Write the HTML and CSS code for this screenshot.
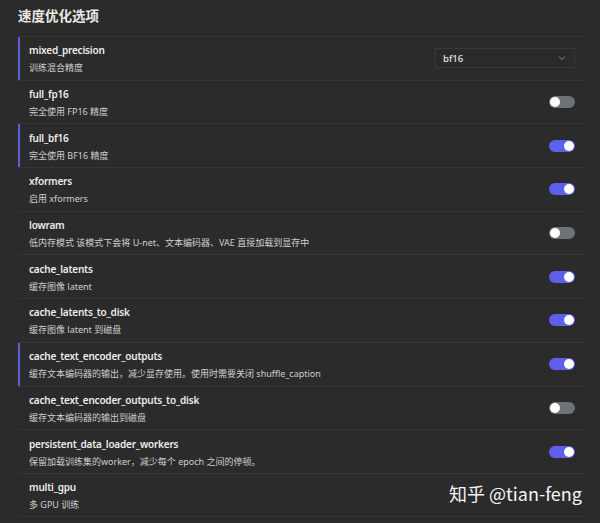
FILE: index.html
```html
<!DOCTYPE html>
<html lang="zh">
<head>
<meta charset="utf-8">
<link rel="stylesheet" href="styles.css">
</head>
<body>
<div class="page">
  <h2 class="heading">速度优化选项</h2>
  <div class="list">
    <div class="row modified">
      <div class="text"><div class="title">mixed_precision</div><div class="desc">训练混合精度</div></div>
      <div class="select"><span>bf16</span><svg class="chev" width="8" height="6" viewBox="0 0 8 6"><path d="M1 1.5 L4 4.5 L7 1.5" fill="none" stroke="#8a8a8a" stroke-width="1"/></svg></div>
    </div>
    <div class="row">
      <div class="text"><div class="title">full_fp16</div><div class="desc">完全使用 FP16 精度</div></div>
      <div class="toggle"></div>
    </div>
    <div class="row modified">
      <div class="text"><div class="title">full_bf16</div><div class="desc">完全使用 BF16 精度</div></div>
      <div class="toggle on"></div>
    </div>
    <div class="row">
      <div class="text"><div class="title">xformers</div><div class="desc">启用 xformers</div></div>
      <div class="toggle on"></div>
    </div>
    <div class="row">
      <div class="text"><div class="title">lowram</div><div class="desc">低内存模式 该模式下会将 U-net、文本编码器、VAE 直接加载到显存中</div></div>
      <div class="toggle"></div>
    </div>
    <div class="row">
      <div class="text"><div class="title">cache_latents</div><div class="desc">缓存图像 latent</div></div>
      <div class="toggle on"></div>
    </div>
    <div class="row">
      <div class="text"><div class="title">cache_latents_to_disk</div><div class="desc">缓存图像 latent 到磁盘</div></div>
      <div class="toggle on"></div>
    </div>
    <div class="row modified">
      <div class="text"><div class="title">cache_text_encoder_outputs</div><div class="desc">缓存文本编码器的输出，减少显存使用。使用时需要关闭 shuffle_caption</div></div>
      <div class="toggle on"></div>
    </div>
    <div class="row">
      <div class="text"><div class="title">cache_text_encoder_outputs_to_disk</div><div class="desc">缓存文本编码器的输出到磁盘</div></div>
      <div class="toggle"></div>
    </div>
    <div class="row">
      <div class="text"><div class="title">persistent_data_loader_workers</div><div class="desc">保留加载训练集的worker，减少每个 epoch 之间的停顿。</div></div>
      <div class="toggle on"></div>
    </div>
    <div class="row">
      <div class="text"><div class="title">multi_gpu</div><div class="desc">多 GPU 训练</div></div>
    </div>
  </div>
</div>
<div class="watermark">知乎 @tian-feng</div>
</body>
</html>
```

FILE: styles.css
```css
html, body {
  margin: 0;
  padding: 0;
  background: #2b2b2b;
  height: 523px;
  overflow: hidden;
}
body {
  font-family: "Noto Sans", "Noto Sans CJK SC", sans-serif;
  color: #e6e6e6;
  position: relative;
}
.page {
  width: 567px;
  margin-left: 18px;
}
.heading {
  margin: 0;
  height: 36px;
  box-sizing: border-box;
  padding-top: 6px;
  font-size: 13.5px;
  line-height: 20px;
  font-weight: 700;
  color: #e8e8e8;
}
.row {
  height: 43.7px;
  box-sizing: border-box;
  border-top: 1px solid #363636;
  display: flex;
  align-items: center;
  justify-content: space-between;
  padding: 0 10px 0 11px;
  position: relative;
}
.row:last-child {
  border-bottom: 1px solid #363636;
}
.row.modified::before {
  content: "";
  position: absolute;
  left: 0;
  top: 0;
  bottom: 0;
  width: 2px;
  background: #5c5fd6;
}
.text {
  display: flex;
  flex-direction: column;
  gap: 3px;
  padding-top: 2px;
}
.title {
  font-size: 10px;
  line-height: 15px;
  font-weight: 600;
  letter-spacing: -0.2px;
  color: #ececec;
}
.desc {
  font-size: 9px;
  line-height: 14px;
  color: #cfcfcf;
}
.toggle {
  width: 26px;
  height: 12px;
  border-radius: 6px;
  background: #6e7277;
  position: relative;
}
.toggle::after {
  content: "";
  position: absolute;
  top: 1px;
  left: 1px;
  width: 10px;
  height: 10px;
  border-radius: 50%;
  background: #ffffff;
}
.toggle.on {
  background: #5c60ea;
}
.toggle.on::after {
  left: 15px;
}
.select {
  width: 140px;
  height: 20px;
  box-sizing: border-box;
  border: 1px solid #383838;
  background: #2a2a2a;
  display: flex;
  align-items: center;
  justify-content: space-between;
  padding: 0 8px 0 7px;
  font-size: 9.5px;
  font-weight: 500;
  color: #e4e4e4;
}
.watermark {
  position: absolute;
  left: 449px;
  top: 480px;
  font-size: 18px;
  line-height: 26px;
  color: #f4f4f4;
  font-family: "Noto Sans CJK SC", "Noto Sans", sans-serif;
}
```
